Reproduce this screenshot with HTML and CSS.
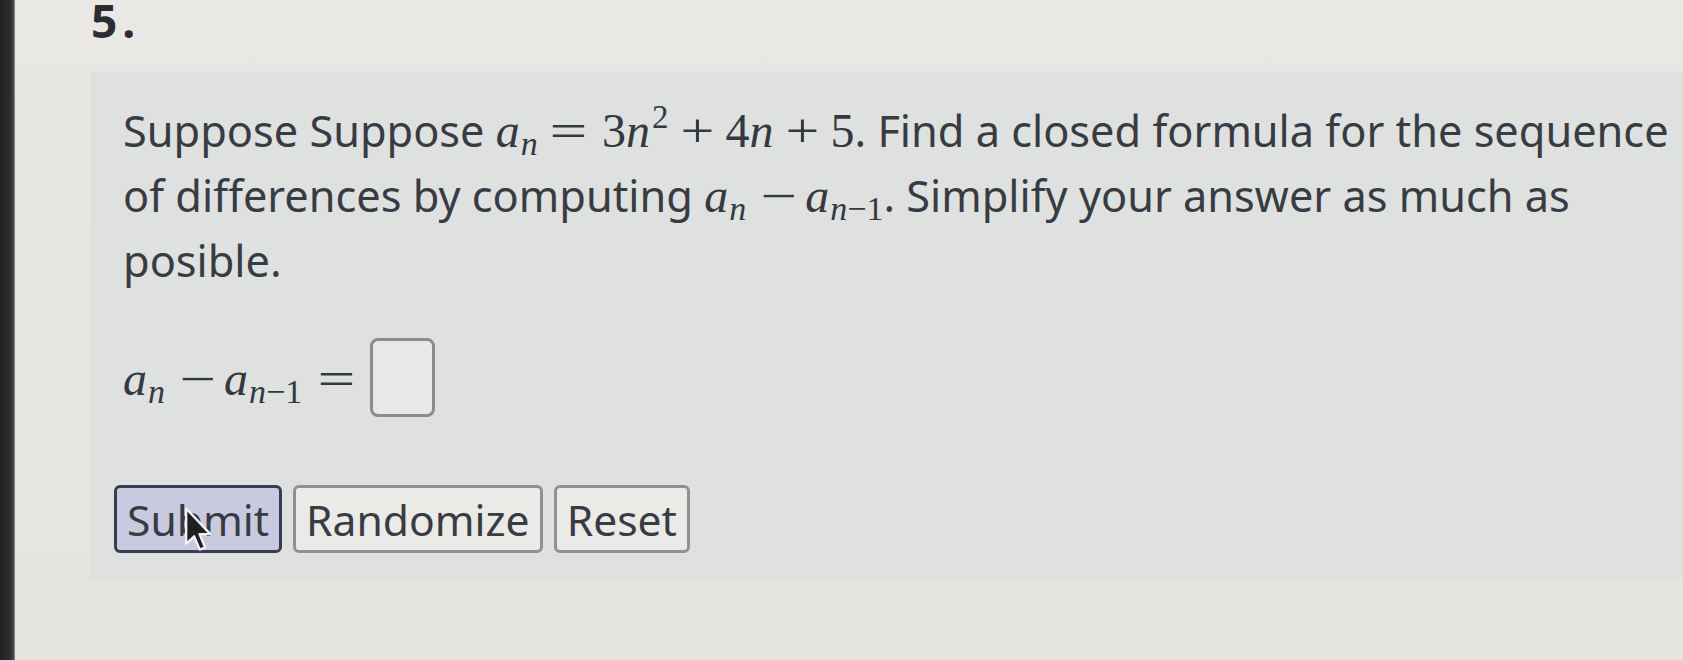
FILE: index.html
```html
<!DOCTYPE html>
<html lang="en">
<head>
<meta charset="utf-8">
<title>Problem 5</title>
<link rel="stylesheet" href="styles.css">
</head>
<body>
<div class="screen">
  <div class="edge"></div>
  <div class="page">
    <h2 class="num">5.</h2>
    <section class="panel">
      <p class="prompt">Suppose Suppose <span class="m"><span class="mi">a</span><span class="sub mi">n</span><span class="op eqs">=</span>3<span class="mi">n</span><span class="sup">2</span><span class="op plus">+</span>4<span class="mi">n</span><span class="op plus">+</span>5</span>. Find a closed formula for the sequence<br>of differences by computing <span class="m"><span class="mi">a</span><span class="sub mi">n</span><span class="op minus">&minus;</span><span class="mi">a</span><span class="sub"><span class="mi">n</span>&minus;1</span></span>. Simplify your answer as much as<br>posible.</p>
      <div class="eq">
        <span class="m"><span class="mi">a</span><span class="sub mi">n</span><span class="op minus">&minus;</span><span class="mi">a</span><span class="sub"><span class="mi">n</span>&minus;1</span><span class="op eqs">=</span></span><span class="answer"></span>
      </div>
      <div class="buttons">
        <button class="btn submit">Submit<svg class="cursor" width="28" height="47" viewBox="0 0 13 21.5"><path d="M1 1 L1 17.4 L4.7 13.9 L7.3 20.1 L9.8 19.1 L7.2 12.9 L12.2 12.9 Z" fill="#1e1f22" stroke="#f2f2f2" stroke-width="1.1" stroke-linejoin="round"/></svg></button>
        <button class="btn">Randomize</button>
        <button class="btn">Reset</button>
      </div>
    </section>
  </div>
</div>
</body>
</html>
```
FILE: styles.css
```css
html, body {
  margin: 0;
  padding: 0;
  height: 100%;
}

body {
  background: #e7e6e1;
  font-family: "Noto Sans", "Open Sans", sans-serif;
  color: #383b42;
  overflow: hidden;
}

.screen {
  display: flex;
  height: 660px;
}

.edge {
  width: 15px;
  flex: none;
  background: linear-gradient(to right, #1f1f21 0%, #2e2e30 70%, #4a4a4a 90%, #9a9995 100%);
}

.page {
  flex: 1;
  padding-left: 75px;
  display: flex;
  flex-direction: column;
  background: linear-gradient(to bottom, #e9e8e4 0%, #e7e6e2 60%, #e5e3de 100%);
}

.num {
  margin: 0;
  padding-left: 1px;
  font-size: 46px;
  line-height: 40px;
  font-weight: 700;
  letter-spacing: 5px;
  color: #2b2d32;
}

.panel {
  margin-top: 32px;
  height: 508px;
  box-sizing: border-box;
  padding: 26px 0 0 33px;
  background: #dee1e0;
}

.prompt {
  margin: 0;
  font-size: 43.3px;
  line-height: 65px;
  white-space: nowrap;
}

.m {
  font-family: "Liberation Serif", "Times New Roman", serif;
  font-size: 48px;
  line-height: 0;
  white-space: nowrap;
  color: #35383f;
}

.mi {
  font-style: italic;
}

.sub {
  font-size: 34px;
  vertical-align: -8px;
  margin-left: 1px;
}

.sup {
  font-size: 33px;
  vertical-align: 19px;
  margin-left: 2px;
}

.op {
  display: inline-block;
}

.eqs {
  transform: scaleX(1.4);
  margin: 0 20px 0 17px;
}

.plus {
  transform: scaleX(1.25);
  margin: 0 14px 0 16px;
}

.minus {
  transform: scaleX(1.35);
  margin: 0 13px 0 19px;
}

.eq {
  margin-top: 45px;
  line-height: 0;
  white-space: nowrap;
}

.eq .eqs {
  margin: 0 20px 0 21px;
}

.answer {
  display: inline-block;
  width: 65px;
  height: 79px;
  box-sizing: border-box;
  border: 3px solid #8b8c8e;
  border-radius: 8px;
  background: #e7e9e8;
  vertical-align: -22px;
}

.buttons {
  margin-top: 68px;
  margin-left: -9px;
  display: flex;
  gap: 11px;
}

.btn {
  position: relative;
  height: 68px;
  box-sizing: border-box;
  margin: 0;
  padding: 0 10px;
  font-family: "Noto Sans", "Open Sans", sans-serif;
  font-size: 42.6px;
  line-height: 60px;
  color: #383b42;
  background: #eaeae7;
  border: 3px solid #909094;
  border-radius: 6px;
}

.submit {
  background: #c9cadf;
  border-color: #3a3b50;
}

.cursor {
  position: absolute;
  left: 67px;
  top: 18px;
}
```
